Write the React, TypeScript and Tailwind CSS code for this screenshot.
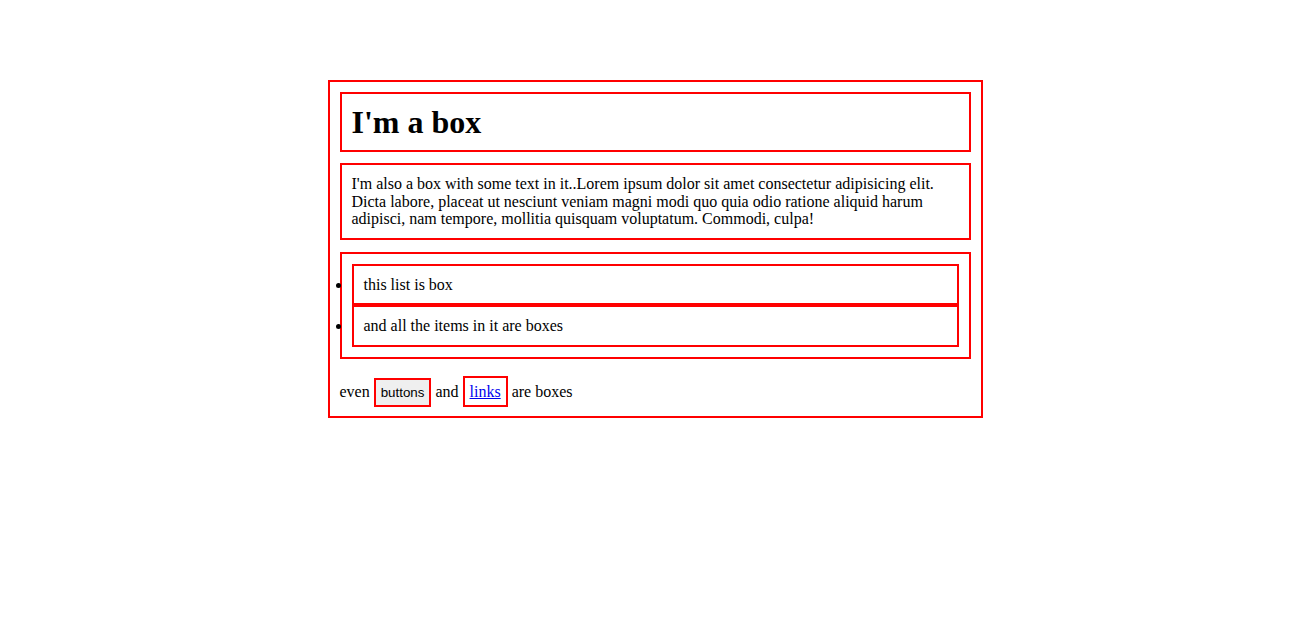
export default function App() {
  return (
    <div className="min-h-screen bg-white pt-[80px] font-['Liberation_Serif',serif] text-[16px] text-black">
      <div className="mx-auto w-[655px] border-2 border-[#ff0000] px-[10px] pt-[10px] pb-[9px]">
        <h1 className="border-2 border-[#ff0000] p-[10px] text-[32px] font-bold leading-[36px]">I'm a box</h1>
        <p className="mt-[11px] border-2 border-[#ff0000] p-[10px] leading-[17.6px]">
          I'm also a box with some text in it..Lorem ipsum dolor sit amet consectetur adipisicing elit. Dicta labore,
          placeat ut nesciunt veniam magni modi quo quia odio ratione aliquid harum adipisci, nam tempore, mollitia
          quisquam voluptatum. Commodi, culpa!
        </p>
        <ul className="mt-[12px] list-outside list-disc border-2 border-[#ff0000] p-[10px]">
          <li className="border-2 border-[#ff0000] p-[10px] leading-[17.5px]">this list is box</li>
          <li className="border-2 border-[#ff0000] p-[10px] leading-[17.5px]">and all the items in it are boxes</li>
        </ul>
        <div className="mt-[19px] leading-[18px]">
          even{" "}
          <button className="border-2 border-[#ff0000] bg-[#efefef] px-[5px] py-[5px] font-['Liberation_Sans',Arial,sans-serif] text-[13.33px] leading-[15px]">
            buttons
          </button>{" "}
          and{" "}
          <a href="#" className="border-2 border-[#ff0000] px-[5px] py-[5px] text-[#0000ee] underline">
            links
          </a>{" "}
          are boxes
        </div>
      </div>
    </div>
  );
}
